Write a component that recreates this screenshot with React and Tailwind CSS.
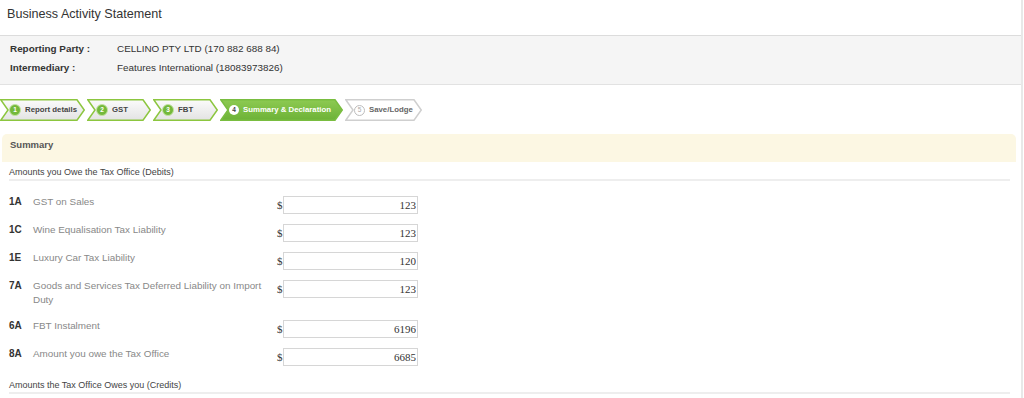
import React from "react";

const steps = [
  { n: 1, label: "Report details", w: 85, state: "done" },
  { n: 2, label: "GST", w: 64, state: "done" },
  { n: 3, label: "FBT", w: 65, state: "done" },
  { n: 4, label: "Summary & Declaration", w: 123, state: "active" },
  { n: 5, label: "Save/Lodge", w: 77, state: "todo" },
];

function Step({ n, label, w, state }) {
  const H = 22;
  const d = 8;
  const s = 0.75;
  const pts = `${s},${s} ${w - d},${s} ${w - s},${H / 2} ${w - d},${H - s} ${s},${H - s} ${d},${H / 2}`;
  const gid = `g${n}`;
  let stops, stroke;
  if (state === "done") {
    stops = ["#fbfbfb", "#e3e3e3"];
    stroke = "#8cc63f";
  } else if (state === "active") {
    stops = ["#8dca52", "#6db237"];
    stroke = "#79bd40";
  } else {
    stops = ["#ffffff", "#ffffff"];
    stroke = "#cfcfcf";
  }
  return (
    <div className="relative h-[22px] shrink-0" style={{ width: w }}>
      <svg className="absolute inset-0" width={w} height={H} viewBox={`0 0 ${w} ${H}`}>
        <defs>
          <linearGradient id={gid} x1="0" y1="0" x2="0" y2="1">
            <stop offset="0" stopColor={stops[0]} />
            <stop offset="1" stopColor={stops[1]} />
          </linearGradient>
        </defs>
        <polygon points={pts} fill={`url(#${gid})`} stroke={stroke} strokeWidth="1.5" />
      </svg>
      <div className="relative flex h-full items-center pl-[9px] gap-[4px]">
        {state === "done" && (
          <span className="flex h-[12px] w-[12px] items-center justify-center rounded-full border-[1.5px] border-[#c2e3a0] bg-[#74b93b] text-[6.5px] font-bold leading-none text-white">
            {n}
          </span>
        )}
        {state === "active" && (
          <span className="flex h-[10px] w-[10px] items-center justify-center rounded-full bg-white text-[6.5px] font-bold leading-none text-[#444]">
            {n}
          </span>
        )}
        {state === "todo" && (
          <span className="flex h-[11px] w-[11px] items-center justify-center rounded-full border border-[#bdbdbd] bg-white text-[6.5px] leading-none text-[#aaa]">
            {n}
          </span>
        )}
        <span
          className={
            "whitespace-nowrap text-[7.8px] font-bold leading-none " +
            (state === "active" ? "text-white" : state === "done" ? "text-[#444]" : "text-[#666]")
          }
        >
          {label}
        </span>
      </div>
    </div>
  );
}

const rows = [
  { code: "1A", label: "GST on Sales", value: "123" },
  { code: "1C", label: "Wine Equalisation Tax Liability", value: "123" },
  { code: "1E", label: "Luxury Car Tax Liability", value: "120" },
  { code: "7A", label: "Goods and Services Tax Deferred Liability on Import Duty", value: "123" },
  { code: "6A", label: "FBT Instalment", value: "6196" },
  { code: "8A", label: "Amount you owe the Tax Office", value: "6685" },
];

function SectionHeading({ children, className = "" }) {
  return (
    <div
      className={
        "ml-[9px] w-[1001px] border-b-2 border-[#eeeeee] pt-[4px] pb-[1px] text-[9px] leading-[12px] text-[#444] " +
        className
      }
    >
      {children}
    </div>
  );
}

export default function App() {
  return (
    <div className="min-h-[398px] w-[1024px] bg-white">
      <div className="min-h-[398px] w-[1023px] border-r-2 border-[#e8e8e8] font-['Liberation_Sans',Arial,sans-serif]">
        <div className="h-[36px] border-b border-[#dcdcdc] pl-[7px] pt-[6px] text-[12.6px] leading-[16px] text-[#333]">
          Business Activity Statement
        </div>
        <div className="h-[49px] border-b border-[#e2e2e2] bg-[#f5f5f5] pl-[10px] pt-[3px] text-[9.9px] leading-[19px] text-[#333]">
          <div className="flex">
            <span className="w-[107px] font-bold">Reporting Party :</span>
            <span>CELLINO PTY LTD (170 882 688 84)</span>
          </div>
          <div className="flex">
            <span className="w-[107px] font-bold">Intermediary :</span>
            <span>Features International (18083973826)</span>
          </div>
        </div>

        <div className="mt-[14px] flex gap-[2px]">
          {steps.map((s) => (
            <Step key={s.n} {...s} />
          ))}
        </div>

        <div className="ml-[2px] mt-[13px] h-[28px] w-[1014px] rounded-t-[5px] bg-[#fcf7e3] pl-[8px] pt-[4px] text-[9.5px] font-bold leading-[14px] text-[#555]">
          Summary
        </div>

        <SectionHeading>Amounts you Owe the Tax Office (Debits)</SectionHeading>

        <div className="mt-[14px] pl-[9px]">
          {rows.map((r) => (
            <div key={r.code} className="mb-[9px] flex items-start">
              <div className="w-[24px] text-[10px] font-bold leading-[13.5px] text-[#333]">{r.code}</div>
              <div className="w-[244px] pb-[4px] pr-[6px] text-[9.9px] leading-[13.5px] text-[#888]">{r.label}</div>
              <div className="mt-[1px] flex items-center">
                <span className="w-[6px] font-['Liberation_Serif','Times_New_Roman',serif] text-[11px] leading-none text-[#333]">
                  $
                </span>
                <input
                  readOnly
                  value={r.value}
                  className="h-[18px] w-[135px] border border-[#d6d6d6] bg-white pr-[1px] text-right font-['Liberation_Serif','Times_New_Roman',serif] text-[11px] text-[#333] outline-none"
                />
              </div>
            </div>
          ))}
        </div>

        <SectionHeading className="mt-[3px]">Amounts the Tax Office Owes you (Credits)</SectionHeading>
      </div>
    </div>
  );
}
